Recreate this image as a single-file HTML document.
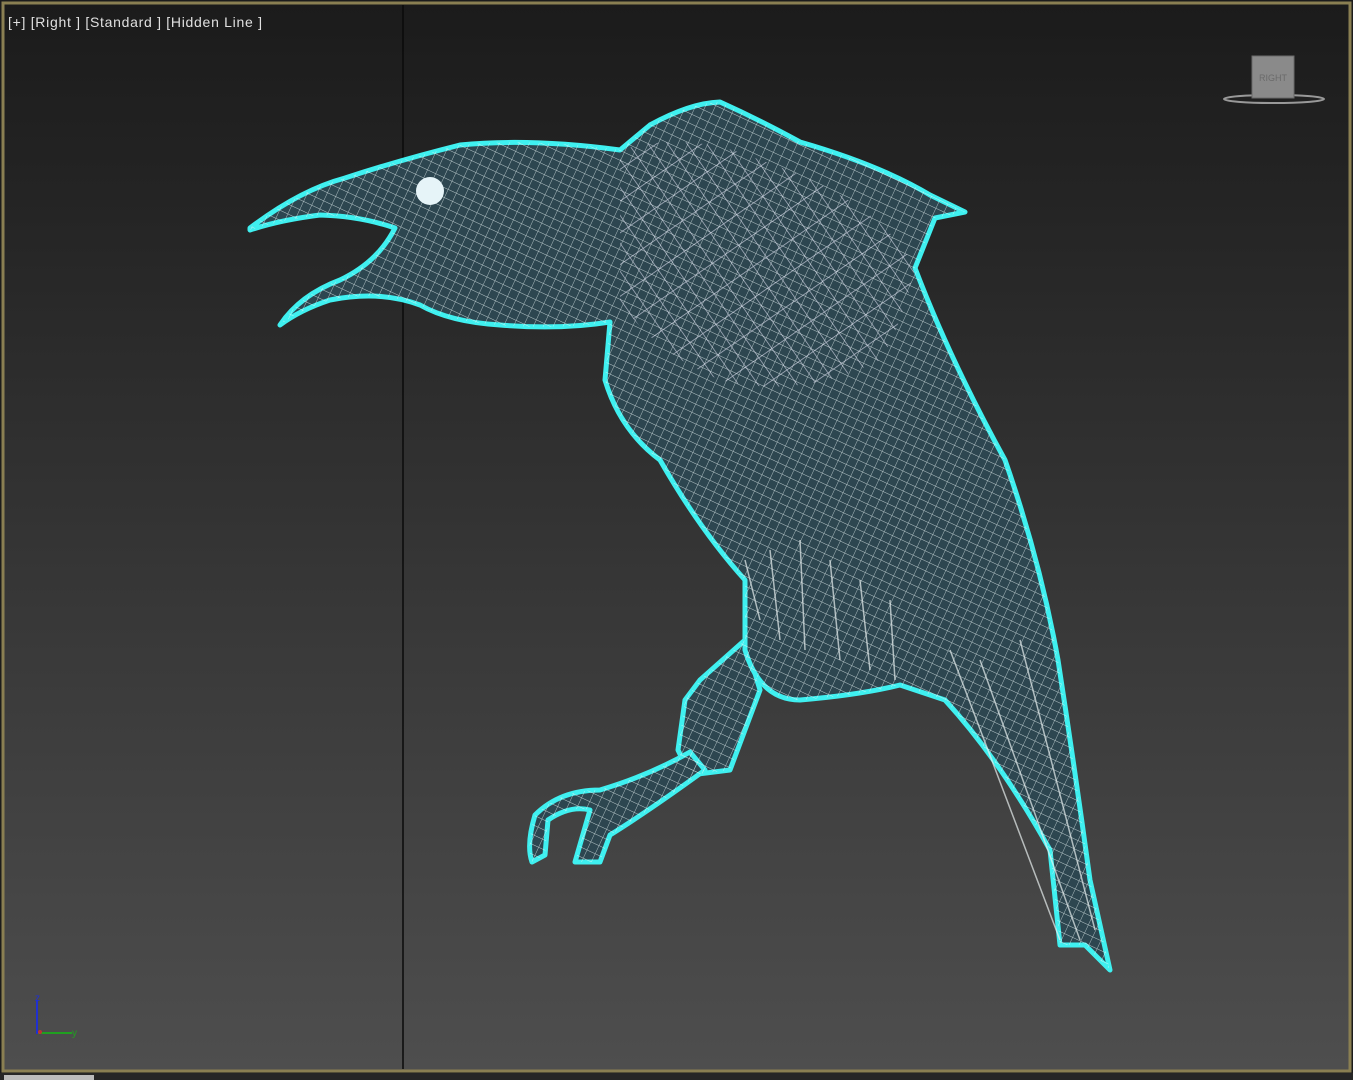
<!DOCTYPE html>
<html><head><meta charset="utf-8"><style>
html,body{margin:0;padding:0;width:1353px;height:1080px;overflow:hidden;background:#2a2a2a}
svg{display:block}
</style></head><body>
<svg width="1353" height="1080" viewBox="0 0 1353 1080" xmlns="http://www.w3.org/2000/svg">
<defs>
<linearGradient id="bg" x1="0" y1="0" x2="0" y2="1">
<stop offset="0" stop-color="#1b1b1b"/><stop offset="0.5" stop-color="#343434"/><stop offset="1" stop-color="#4e4e4e"/>
</linearGradient>
<pattern id="grid" width="9" height="9" patternUnits="userSpaceOnUse" patternTransform="rotate(25)">
<path d="M0 0H9M0 0V9" stroke="#e8f4f4" stroke-width="0.9" fill="none"/>
</pattern>
<pattern id="grid2" width="16" height="26" patternUnits="userSpaceOnUse" patternTransform="rotate(-35)">
<path d="M0 0H16M0 0V26" stroke="#eef" stroke-width="1.4" fill="none"/>
</pattern>
</defs>
<rect width="1353" height="1080" fill="#1c1c1c"/>
<rect x="3" y="3" width="1347" height="1068" fill="url(#bg)" stroke="#8a7f52" stroke-width="3"/>
<line x1="403" y1="5" x2="403" y2="1069" stroke="#0a0a0a" stroke-width="1.5"/>
<rect x="0" y="1073" width="1353" height="7" fill="#262626"/>
<rect x="4" y="1075" width="90" height="5" fill="#bbb"/>
<text x="8" y="27" textLength="254" lengthAdjust="spacing" font-family="Liberation Sans, sans-serif" font-size="14" fill="#e0e0e0">[+] [Right ] [Standard ] [Hidden Line ]</text>
<!-- view cube -->
<ellipse cx="1274" cy="99" rx="50" ry="4" fill="none" stroke="#999" stroke-width="2"/>
<rect x="1252" y="56" width="42" height="42" fill="#8a8a8a" stroke="#6a6a6a"/>
<text x="1273" y="81" text-anchor="middle" font-family="Liberation Sans, sans-serif" font-size="9" fill="#6a6a6a">RIGHT</text>
<!-- axis -->
<line x1="37" y1="1000" x2="37" y2="1034" stroke="#2030d0" stroke-width="2"/>
<line x1="38" y1="1033" x2="72" y2="1033" stroke="#20a020" stroke-width="2"/>
<text x="35" y="1001" font-family="Liberation Sans, sans-serif" font-size="10" fill="#2030d0">z</text>
<text x="72" y="1036" font-family="Liberation Sans, sans-serif" font-size="10" fill="#20a020">y</text>
<circle cx="40" cy="1032" r="2" fill="#c03030"/>
<!-- raven -->
<g stroke="#3ff0f0" stroke-width="5" stroke-linejoin="round" fill="#2d4650">
<path d="M700 680 L745 640 L760 690 L730 770 L690 775 L678 750 L685 700 Z"/>
<path d="M690 752 Q650 775 600 790 Q560 790 535 815 Q526 845 532 862 L545 855 L548 820 Q570 805 590 810 L575 862 L600 862 L610 835 Q650 810 705 770 Z"/>
<path d="M250 228 Q300 190 345 178 Q400 160 460 145 Q530 138 620 150 L650 125 Q690 103 720 102 Q760 120 800 142 Q880 165 930 195 L965 212 L935 218 L915 268 Q950 360 1005 460 Q1040 560 1058 660 Q1075 770 1090 880 L1110 970 L1085 945 L1060 945 L1050 850 Q1000 760 945 700 L900 685 Q860 695 800 700 Q760 700 745 650 L745 580 Q700 530 660 460 Q620 430 605 380 L610 322 Q560 330 500 325 Q450 322 420 305 Q380 290 330 300 Q300 310 280 325 Q300 295 340 280 Q378 262 395 228 Q360 216 320 215 Q280 220 250 230 Z"/>
</g>
<g opacity="0.75">
<path d="M250 228 Q300 190 345 178 Q400 160 460 145 Q530 138 620 150 L650 125 Q690 103 720 102 Q760 120 800 142 Q880 165 930 195 L965 212 L935 218 L915 268 Q950 360 1005 460 Q1040 560 1058 660 Q1075 770 1090 880 L1110 970 L1085 945 L1060 945 L1050 850 Q1000 760 945 700 L900 685 Q860 695 800 700 Q760 700 745 650 L745 580 Q700 530 660 460 Q620 430 605 380 L610 322 Q560 330 500 325 Q450 322 420 305 Q380 290 330 300 Q300 310 280 325 Q300 295 340 280 Q378 262 395 228 Q360 216 320 215 Q280 220 250 230 Z" fill="url(#grid)"/>
<path d="M690 752 Q650 775 600 790 Q560 790 535 815 Q526 845 532 862 L545 855 L548 820 Q570 805 590 810 L575 862 L600 862 L610 835 Q650 810 705 770 Z" fill="url(#grid)"/>
<path d="M700 680 L745 640 L760 690 L730 770 L690 775 L678 750 L685 700 Z" fill="url(#grid)"/>
</g>
<path d="M620 150 Q690 130 760 160 Q880 200 915 268 Q900 330 880 360 Q800 400 720 380 Q650 350 620 300 Z" fill="url(#grid2)" opacity="0.7"/>
<g stroke="#e8f0f0" stroke-width="1.5" fill="none" opacity="0.7">
<path d="M745 560 L760 620 M770 550 L780 640 M800 540 L805 650 M830 560 L840 660 M860 580 L870 670 M890 600 L895 680"/>
<path d="M950 650 L1060 940 M980 660 L1080 940 M1020 640 L1095 930"/>
</g>
<circle cx="430" cy="191" r="14" fill="#e6f4f8"/>
</svg>
</body></html>
